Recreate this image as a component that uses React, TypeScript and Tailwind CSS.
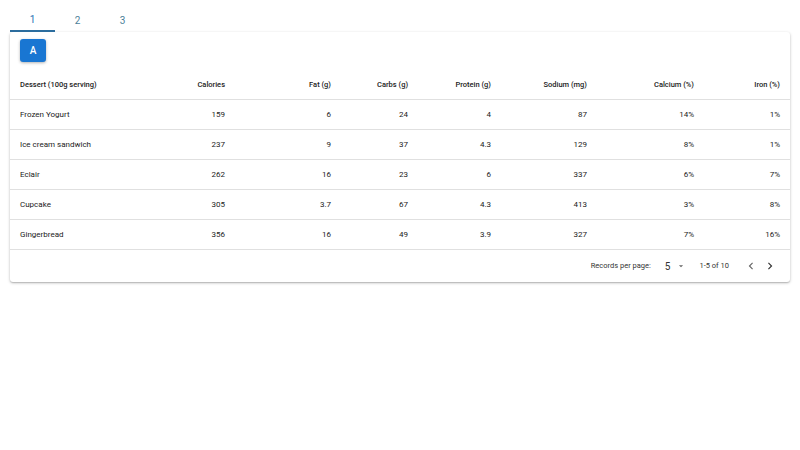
const rows = [
  ["Frozen Yogurt", "159", "6", "24", "4", "87", "14%", "1%"],
  ["Ice cream sandwich", "237", "9", "37", "4.3", "129", "8%", "1%"],
  ["Eclair", "262", "16", "23", "6", "337", "6%", "7%"],
  ["Cupcake", "305", "3.7", "67", "4.3", "413", "3%", "8%"],
  ["Gingerbread", "356", "16", "49", "3.9", "327", "7%", "16%"],
];

const headers = [
  "Dessert (100g serving)",
  "Calories",
  "Fat (g)",
  "Carbs (g)",
  "Protein (g)",
  "Sodium (mg)",
  "Calcium (%)",
  "Iron (%)",
];

const widths = ["w-[150px]", "w-[75px]", "w-[106px]", "w-[77px]", "w-[83px]", "w-[96px]", "w-[107px]", "w-[86px]"];

export default function App() {
  return (
    <main className="min-h-screen bg-white px-[10px] pt-[8px] font-['Roboto',sans-serif] text-[#222]">
      <div className="flex h-[24px] text-[10px]">
        <button className="w-[45px] border-b-2 border-[#2c6d9e] pt-[1px] text-[#2a72b5]">1</button>
        <button className="w-[45px] pt-[1px] text-[#4d7f99]">2</button>
        <button className="w-[45px] pt-[1px] text-[#4d7f99]">3</button>
      </div>
      <section className="w-[780px] rounded-[3px] bg-white shadow-[0_1px_3px_rgba(0,0,0,0.25),0_1px_1px_rgba(0,0,0,0.12)]">
        <div className="px-[10px] pt-[7px]">
          <button className="flex h-[23px] w-[26px] items-center justify-center rounded-[3px] bg-[#1976d2] text-[10px] font-medium text-white shadow-[0_1px_3px_rgba(0,0,0,0.3)]">
            A
          </button>
        </div>
        <table className="mt-[5px] w-full table-fixed border-collapse">
          <colgroup>
            {widths.map((w) => (
              <col key={w} className={w} />
            ))}
          </colgroup>
          <thead>
            <tr className="h-[32px] border-b border-[#e0e0e0]">
              {headers.map((h, i) => (
                <th
                  key={h}
                  className={`px-[10px] pt-[4px] text-[7.5px] font-medium text-[#222] ${i === 0 ? "text-left" : "text-right"}`}
                >
                  {h}
                </th>
              ))}
            </tr>
          </thead>
          <tbody className="text-[8px]">
            {rows.map((r) => (
              <tr key={r[0]} className="h-[30px] border-b border-[#e0e0e0]">
                {r.map((c, i) => (
                  <td key={i} className={`px-[10px] pt-[1px] ${i === 0 ? "text-left" : "text-right"}`}>
                    {c}
                  </td>
                ))}
              </tr>
            ))}
          </tbody>
        </table>
        <div className="flex h-[32px] items-center justify-end pr-[13px] pt-[1px] text-[7.5px] text-[#333]">
          <span>Records per page:</span>
          <span className="ml-[14px] text-[10px]">5</span>
          <svg className="ml-[6px]" width="10" height="10" viewBox="0 0 24 24" fill="#666">
            <path d="M7 10l5 5 5-5z" />
          </svg>
          <span className="ml-[13px]">1-5 of 10</span>
          <svg className="ml-[15px]" width="14" height="14" viewBox="0 0 24 24" fill="#666">
            <path d="M15.41 7.41 14 6l-6 6 6 6 1.41-1.41L10.83 12z" />
          </svg>
          <svg className="ml-[5px]" width="14" height="14" viewBox="0 0 24 24" fill="#333">
            <path d="M10 6 8.59 7.41 13.17 12l-4.58 4.59L10 18l6-6z" />
          </svg>
        </div>
      </section>
    </main>
  );
}
